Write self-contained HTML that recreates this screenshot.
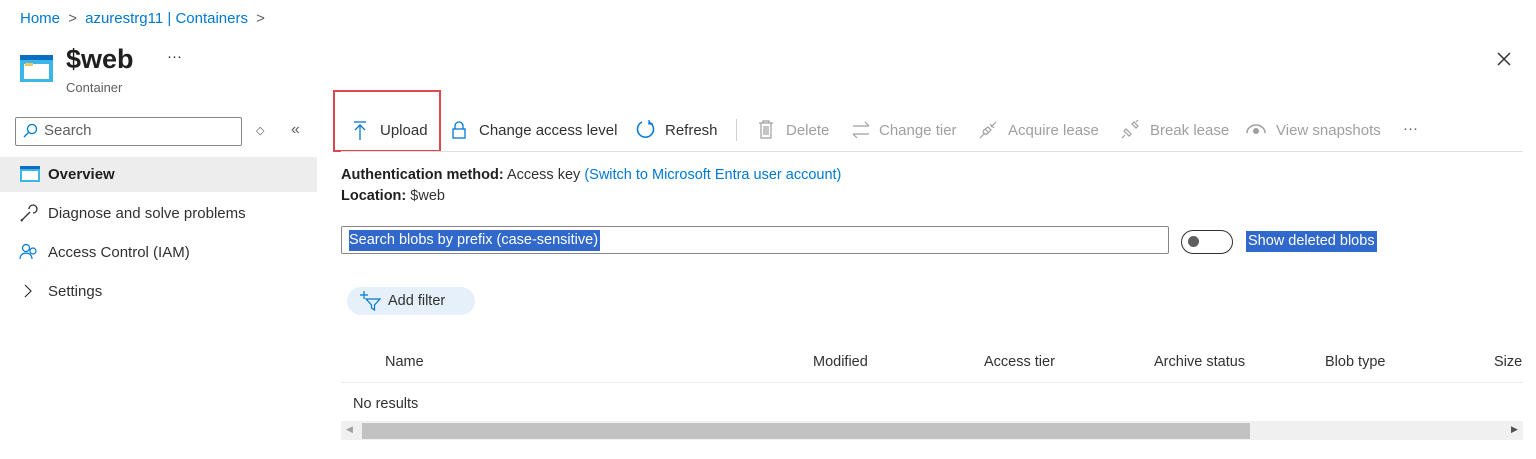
<!DOCTYPE html><html><head><meta charset="utf-8"><style>
body{margin:0;width:1536px;height:459px;background:#fff;font-family:"Liberation Sans",sans-serif;color:#323130;position:relative;overflow:hidden;font-size:15px}
.a{position:absolute;white-space:nowrap}
.b{color:#0078d4}.g{color:#a19f9d}
svg{position:absolute}
</style></head><body>
<div class="a b" style="left:20px;top:10px;font-size:15px">Home <span style="color:#605e5c;margin:0 4px">&gt;</span> azurestrg11 | Containers <span style="color:#605e5c;margin-left:4px">&gt;</span></div>
<svg style="left:20px;top:55px" width="33" height="27" viewBox="0 0 33 27"><rect x="0" y="0" width="33" height="27" fill="#3cb5e8"/><rect x="0" y="0" width="33" height="5" fill="#0a6ec2"/><rect x="4" y="9" width="25" height="15" fill="#fff"/><rect x="5" y="8" width="8" height="3" fill="#f5c35a"/></svg>
<div class="a" style="left:66px;top:44px;font-size:27px;font-weight:bold;color:#201f1e">$web</div>
<div class="a" style="left:167px;top:48px;font-size:15px">···</div>
<div class="a" style="left:66px;top:80px;font-size:13px;color:#605e5c">Container</div>
<svg style="left:1497px;top:52px" width="14" height="14"><path d="M1 1L13 13M13 1L1 13" stroke="#323130" stroke-width="1.5"/></svg>
<div class="a" style="left:15px;top:117px;width:225px;height:27px;border:1px solid #8a8886;border-radius:2px"></div>
<svg style="left:22px;top:123px" width="16" height="16"><circle cx="10" cy="6" r="4.5" fill="none" stroke="#0078d4" stroke-width="1.3"/><line x1="7" y1="9" x2="2" y2="14" stroke="#0078d4" stroke-width="1.3"/></svg>
<div class="a" style="left:44px;top:122px;color:#605e5c">Search</div>
<div class="a" style="left:256px;top:124px;font-size:11px;color:#605e5c">◇</div>
<div class="a" style="left:291px;top:121px;font-size:16px;color:#605e5c">«</div>
<div class="a" style="left:0;top:157px;width:317px;height:35px;background:#ededed"></div>
<svg style="left:20px;top:166px" width="20" height="16"><rect width="20" height="16" fill="#3cb5e8"/><rect width="20" height="3" fill="#0a6ec2"/><rect x="2" y="5" width="16" height="9" fill="#fff"/></svg>
<div class="a" style="left:48px;top:166px;font-weight:bold;color:#201f1e">Overview</div>
<svg style="left:20px;top:204px" width="18" height="18"><path d="M2 16L10 8M10 8a4 4 0 1 0 0 0M9 5a4 4 0 1 1 4 4" fill="none" stroke="#323130" stroke-width="1.3"/><path d="M1 17l1.5-1.5" stroke="#323130" stroke-width="2"/></svg>
<div class="a" style="left:48px;top:205px">Diagnose and solve problems</div>
<svg style="left:19px;top:243px" width="20" height="18"><circle cx="7" cy="5" r="3.5" fill="none" stroke="#0078d4" stroke-width="1.2"/><path d="M1 16c0-4 3-6 6-6s6 2 6 6" fill="none" stroke="#0078d4" stroke-width="1.2"/><circle cx="14" cy="8" r="3" fill="none" stroke="#0078d4" stroke-width="1.2"/></svg>
<div class="a" style="left:48px;top:244px">Access Control (IAM)</div>
<svg style="left:24px;top:284px" width="8" height="14"><path d="M1 1l6 6-6 6" fill="none" stroke="#323130" stroke-width="1.2"/></svg>
<div class="a" style="left:48px;top:283px">Settings</div>
<div class="a" style="left:333px;top:90px;width:104px;height:58px;border:2px solid #e0474c"></div>
<svg style="left:352px;top:121px" width="16" height="20"><line x1="2" y1="1" x2="14" y2="1" stroke="#0078d4" stroke-width="1.3"/><line x1="8" y1="4" x2="8" y2="19" stroke="#0078d4" stroke-width="1.3"/><path d="M3 9l5-5 5 5" fill="none" stroke="#0078d4" stroke-width="1.3"/></svg>
<div class="a" style="left:380px;top:122px">Upload</div>
<svg style="left:451px;top:120px" width="16" height="20"><path d="M4 9V6a4 4 0 0 1 8 0v3" fill="none" stroke="#0078d4" stroke-width="1.3"/><rect x="2" y="9" width="12" height="9" fill="none" stroke="#0078d4" stroke-width="1.3"/></svg>
<div class="a" style="left:479px;top:122px">Change access level</div>
<svg style="left:634px;top:119px" width="22" height="22"><path d="M8 3A8 8 0 1 0 15 3" fill="none" stroke="#0078d4" stroke-width="1.5"/><path d="M15 1v4h4" fill="none" stroke="#0078d4" stroke-width="1.3"/></svg>
<div class="a" style="left:665px;top:122px">Refresh</div>
<div class="a" style="left:736px;top:119px;width:1px;height:22px;background:#d0d0d0"></div>
<svg style="left:758px;top:120px" width="16" height="20"><path d="M1 3h14M5 3V1h6v2M3 3v15h10V3M6 6v9M8 6v9M10 6v9" fill="none" stroke="#a19f9d" stroke-width="1.2"/></svg>
<div class="a g" style="left:786px;top:122px">Delete</div>
<svg style="left:851px;top:121px" width="20" height="18"><path d="M2 5h16M14 1l4 4M18 13H2M6 17l-4-4" fill="none" stroke="#a19f9d" stroke-width="1.2"/></svg>
<div class="a g" style="left:879px;top:122px">Change tier</div>
<svg style="left:978px;top:120px" width="20" height="20"><path d="M2 18l5-5M7 9l4 4M6 10c-2 2 0 5 3 4l4-4-3-3zM13 7l5-5M12 4l4 4" fill="none" stroke="#a19f9d" stroke-width="1.2"/></svg>
<div class="a g" style="left:1008px;top:122px">Acquire lease</div>
<svg style="left:1120px;top:120px" width="20" height="20"><path d="M2 18l3-3M4 11l5 5M4 11l2-2 5 5-2 2zM12 4l4 4 2-2-4-4zM16 2l2-2" fill="none" stroke="#a19f9d" stroke-width="1.2"/></svg>
<div class="a g" style="left:1150px;top:122px">Break lease</div>
<svg style="left:1246px;top:123px" width="20" height="12"><path d="M1 10a9 8 0 0 1 18 0" fill="none" stroke="#a19f9d" stroke-width="1.5"/><circle cx="10" cy="8" r="3" fill="#a19f9d"/></svg>
<div class="a g" style="left:1276px;top:122px">View snapshots</div>
<div class="a" style="left:1403px;top:120px;color:#605e5c">···</div>
<div class="a" style="left:341px;top:151px;width:1182px;height:1px;background:#e1dfdd"></div>
<div class="a" style="left:341px;top:167px;font-size:14.5px"><b style="color:#201f1e">Authentication method:</b> Access key <span class="b">(Switch to Microsoft Entra user account)</span></div>
<div class="a" style="left:341px;top:188px;font-size:14.5px"><b style="color:#201f1e">Location:</b> $web</div>
<div class="a" style="left:341px;top:226px;width:826px;height:26px;border:1px solid #8a8886;border-radius:2px"></div>
<div class="a" style="left:349px;top:230px;height:21px;background:#3168cc;color:#fff;font-size:14.5px;line-height:21px;padding-right:2px">Search blobs by prefix (case-sensitive)</div>
<div class="a" style="left:1181px;top:230px;width:50px;height:22px;border:1px solid #323130;border-radius:12px"></div>
<div class="a" style="left:1188px;top:236px;width:11px;height:11px;border-radius:50%;background:#605e5c"></div>
<div class="a" style="left:1246px;top:231px;height:21px;background:#3168cc;color:#fff;font-size:14.5px;line-height:21px;padding:0 2px">Show deleted blobs</div>
<div class="a" style="left:347px;top:287px;width:128px;height:28px;border-radius:14px;background:#e5f0fa"></div>
<svg style="left:359px;top:290px" width="24" height="22"><path d="M5 1v8M1 5h8" stroke="#0078d4" stroke-width="1.2"/><path d="M7 9h14l-5.5 6v5l-3-2v-3z" fill="none" stroke="#0078d4" stroke-width="1.2"/></svg>
<div class="a" style="left:388px;top:293px;font-size:14.5px">Add filter</div>
<div class="a" style="left:385px;top:354px;font-size:14.5px">Name</div>
<div class="a" style="left:813px;top:354px;font-size:14.5px">Modified</div>
<div class="a" style="left:984px;top:354px;font-size:14.5px">Access tier</div>
<div class="a" style="left:1154px;top:354px;font-size:14.5px">Archive status</div>
<div class="a" style="left:1325px;top:354px;font-size:14.5px">Blob type</div>
<div class="a" style="left:1494px;top:354px;font-size:14.5px">Size</div>
<div class="a" style="left:341px;top:382px;width:1182px;height:1px;background:#edebe9"></div>
<div class="a" style="left:353px;top:396px;font-size:14.5px">No results</div>
<div class="a" style="left:341px;top:421px;width:1182px;height:19px;background:#f0f0f0"></div>
<div class="a" style="left:362px;top:423px;width:888px;height:16px;background:#c2c2c2"></div>
<div class="a" style="left:346px;top:424px;font-size:9px;color:#a0a0a0">◀</div>
<div class="a" style="left:1511px;top:424px;font-size:9px;color:#505050">▶</div>
</body></html>
